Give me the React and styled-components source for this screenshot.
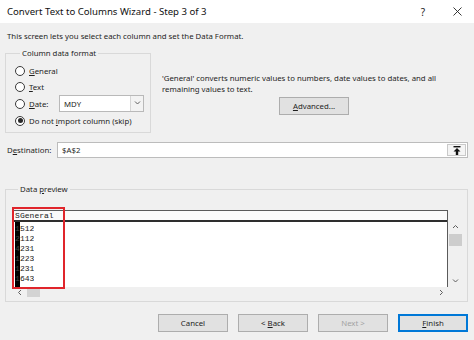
import React from "react";
import styled, { createGlobalStyle } from "styled-components";

const Global = createGlobalStyle`
  html, body { margin: 0; padding: 0; background: #f0f0f0; }
  body { font-family: "Noto Sans", "Open Sans", sans-serif; color: #1e1e1e; }
  u { text-decoration: underline; text-underline-offset: 1px; }
`;

const Window = styled.div`
  width: 474px;
  height: 340px;
  background: #f0f0f0;
  display: flex;
  flex-direction: column;
  overflow: hidden;
`;

const TitleBar = styled.div`
  height: 23px;
  flex: none;
  background: #fff;
  display: flex;
  align-items: center;
  justify-content: space-between;
  padding: 0 12px 0 7px;
  font-size: 9.6px;
  color: #111;
`;

const TitleControls = styled.div`
  display: flex;
  align-items: center;
  gap: 28px;
  font-size: 10px;
  color: #222;
`;

const Content = styled.div`
  padding: 0 6px 0 5px;
  display: flex;
  flex-direction: column;
  font-size: 7.8px;
  line-height: 10px;
`;

const Intro = styled.div`
  margin-top: 8px;
  padding-left: 2px;
`;

const TopRow = styled.div`
  display: flex;
  margin-top: 7px;
`;

const Group = styled.fieldset`
  margin: 0;
  min-width: 0;
  border: 1px solid #d9d9d9;
  padding: ${(p) => p.$pad};
  width: ${(p) => p.$w || "auto"};
  box-sizing: border-box;
`;

const Legend = styled.legend`
  margin-left: 5px;
  padding: 0 2px;
  font-size: 7.8px;
  line-height: 10px;
`;

const RadioRow = styled.label`
  display: flex;
  align-items: center;
  height: ${(p) => p.$h || 16}px;
  gap: 4px;
`;

const Radio = styled.span`
  width: 10px;
  height: 10px;
  box-sizing: border-box;
  border-radius: 50%;
  border: 1px solid #3a3a3a;
  background: #fff;
  display: flex;
  align-items: center;
  justify-content: center;
  flex: none;
  &::after {
    content: "";
    width: 5px;
    height: 5px;
    border-radius: 50%;
    background: ${(p) => (p.$checked ? "#2a2a2a" : "transparent")};
  }
`;

const DateLabel = styled.span`
  width: 26px;
`;

const Combo = styled.div`
  width: 85px;
  height: 17px;
  box-sizing: border-box;
  border: 1px solid #b9b9b9;
  background: #fff;
  display: flex;
  align-items: stretch;
`;

const ComboText = styled.span`
  flex: 1;
  padding-left: 4px;
  display: flex;
  align-items: center;
`;

const ComboButton = styled.span`
  width: 12px;
  border-left: 1px solid #d6d6d6;
  background: #f3f3f3;
  display: flex;
  align-items: center;
  justify-content: center;
`;

const InfoCol = styled.div`
  margin-left: 11px;
  padding-top: 25px;
  display: flex;
  flex-direction: column;
  line-height: 11px;
`;

const Button = styled.button`
  width: 70px;
  height: 18px;
  box-sizing: border-box;
  border: 1px solid ${(p) => (p.$default ? "#0078d7" : "#adadad")};
  box-shadow: ${(p) => (p.$default ? "inset 0 0 0 1px #0078d7" : "none")};
  background: #e1e1e1;
  color: ${(p) => (p.$disabled ? "#a3a3a3" : "#1e1e1e")};
  font-family: "Noto Sans", "Open Sans", sans-serif;
  font-size: 7.8px;
  padding: 0;
  margin: 0;
  display: flex;
  align-items: center;
  justify-content: center;
`;

const AdvancedWrap = styled.div`
  margin-top: 2px;
  margin-left: 117px;
`;

const DestRow = styled.div`
  display: flex;
  align-items: center;
  margin-top: 9px;
  padding-left: 2px;
`;

const DestLabel = styled.span`
  width: 50px;
`;

const DestInput = styled.div`
  flex: 1;
  height: 16px;
  box-sizing: border-box;
  border: 1px solid #bcbcbc;
  background: #fff;
  display: flex;
  align-items: stretch;
`;

const DestText = styled.span`
  flex: 1;
  padding-left: 4px;
  display: flex;
  align-items: center;
`;

const DestButton = styled.span`
  width: 17px;
  margin: 1px;
  border: 1px solid #c9c9c9;
  background: #f4f4f4;
  display: flex;
  align-items: center;
  justify-content: center;
`;

const PreviewBox = styled.div`
  position: relative;
  display: grid;
  grid-template-columns: 1fr 15px;
  grid-template-rows: 80px 11px;
`;

const GridArea = styled.div`
  padding-top: 3px;
  display: flex;
  flex-direction: column;
`;

const Table = styled.div`
  flex: 1;
  border: 1px solid #5a5a5a;
  border-bottom: none;
  background: #fff;
  display: flex;
  flex-direction: column;
  font-family: "Liberation Mono", "DejaVu Sans Mono", monospace;
  font-size: 8px;
  line-height: 10px;
  color: #222;
`;

const HeaderRow = styled.div`
  height: 9px;
  display: flex;
  padding-left: 1px;
  background: #fafafa;
  border-bottom: 2px solid #2e2e2e;
  line-height: 10px;
`;

const Body = styled.div`
  flex: 1;
  display: flex;
  padding-left: 1px;
`;

const Col = styled.div`
  width: ${(p) => (p.$w ? `${p.$w}px` : "auto")};
  background: ${(p) => (p.$selected ? "#000" : "transparent")};
  color: ${(p) => (p.$selected ? "#444" : "#222")};
  padding-top: 2px;
  overflow: hidden;
  white-space: pre;
`;

const HeadCell = styled.span`
  width: ${(p) => (p.$w ? `${p.$w}px` : "auto")};
  overflow: hidden;
  white-space: pre;
`;

const VScroll = styled.div`
  margin-top: 14px;
  display: flex;
  flex-direction: column;
  align-items: center;
`;

const ScrollArrow = styled.div`
  height: 12px;
  width: 100%;
  display: flex;
  align-items: center;
  justify-content: center;
`;

const VThumb = styled.div`
  width: 13px;
  height: 12px;
  margin-top: 1px;
  background: #cdcdcd;
`;

const Spacer = styled.div`
  flex: 1;
`;

const HScroll = styled.div`
  display: flex;
  align-items: center;
`;

const HArrow = styled.div`
  width: 14px;
  height: 11px;
  display: flex;
  align-items: center;
  justify-content: center;
`;

const HThumb = styled.div`
  width: 13px;
  height: 8px;
  background: #d3d3d3;
`;

const Highlight = styled.div`
  position: absolute;
  left: -1px;
  top: 0;
  width: 53px;
  height: 82px;
  box-sizing: border-box;
  border: 2px solid #e0252b;
  pointer-events: none;
`;

const ButtonRow = styled.div`
  display: flex;
  justify-content: flex-end;
  gap: 10px;
  margin-top: 12px;
`;

const Chevron = ({ dir }) => {
  const pts = {
    up: "1,4 3.5,1.5 6,4",
    down: "1,1.5 3.5,4 6,1.5",
    left: "4,1 1.5,3.5 4,6",
    right: "2,1 4.5,3.5 2,6",
  }[dir];
  return (
    <svg width="7" height="7" viewBox="0 0 7 7">
      <polyline points={pts} fill="none" stroke="#5f5f5f" strokeWidth="1" />
    </svg>
  );
};

const CloseIcon = () => (
  <svg width="9" height="9" viewBox="0 0 9 9">
    <path d="M0.5 0.5 L8.5 8.5 M8.5 0.5 L0.5 8.5" stroke="#222" strokeWidth="0.9" />
  </svg>
);

const UploadIcon = () => (
  <svg width="8" height="9" viewBox="0 0 8 9">
    <rect x="0.5" y="0" width="7" height="1.4" fill="#111" />
    <polygon points="4,2 7.5,5.5 5.2,5.5 5.2,9 2.8,9 2.8,5.5 0.5,5.5" fill="#111" />
  </svg>
);

const firstChars = ["1", "2", "4", "1", "1", "1"];
const values = ["512", "112", "231", "223", "231", "643"];

export default function App() {
  return (
    <Window>
      <Global />
      <TitleBar>
        <span>Convert Text to Columns Wizard - Step 3 of 3</span>
        <TitleControls>
          <span>?</span>
          <CloseIcon />
        </TitleControls>
      </TitleBar>
      <Content>
        <Intro>This screen lets you select each column and set the Data Format.</Intro>
        <TopRow>
          <Group $w="146px" $pad="5px 4px 3px 9px">
            <Legend>Column data format</Legend>
            <RadioRow>
              <Radio />
              <span>
                <u>G</u>eneral
              </span>
            </RadioRow>
            <RadioRow>
              <Radio />
              <span>
                <u>T</u>ext
              </span>
            </RadioRow>
            <RadioRow $h={17}>
              <Radio />
              <DateLabel>
                <u>D</u>ate:
              </DateLabel>
              <Combo>
                <ComboText>MDY</ComboText>
                <ComboButton>
                  <Chevron dir="down" />
                </ComboButton>
              </Combo>
            </RadioRow>
            <RadioRow $h={17}>
              <Radio $checked />
              <span>
                Do not <u>i</u>mport column (skip)
              </span>
            </RadioRow>
          </Group>
          <InfoCol>
            <span>'General' converts numeric values to numbers, date values to dates, and all</span>
            <span>remaining values to text.</span>
            <AdvancedWrap>
              <Button>
                <span>
                  <u>A</u>dvanced...
                </span>
              </Button>
            </AdvancedWrap>
          </InfoCol>
        </TopRow>
        <DestRow>
          <DestLabel>
            D<u>e</u>stination:
          </DestLabel>
          <DestInput>
            <DestText>$A$2</DestText>
            <DestButton>
              <UploadIcon />
            </DestButton>
          </DestInput>
        </DestRow>
        <Group style={{ marginTop: 26 }} $pad="13px 4px 3px 7px">
          <Legend>
            Data <u>p</u>review
          </Legend>
          <PreviewBox>
            <GridArea>
              <Table>
                <HeaderRow>
                  <HeadCell $w={5}>S</HeadCell>
                  <HeadCell>General</HeadCell>
                </HeaderRow>
                <Body>
                  <Col $w={5} $selected>
                    {firstChars.map((c, i) => (
                      <div key={i}>{c}</div>
                    ))}
                  </Col>
                  <Col>
                    {values.map((v, i) => (
                      <div key={i}>{v}</div>
                    ))}
                  </Col>
                </Body>
              </Table>
            </GridArea>
            <VScroll>
              <ScrollArrow>
                <Chevron dir="up" />
              </ScrollArrow>
              <VThumb />
              <Spacer />
              <ScrollArrow>
                <Chevron dir="down" />
              </ScrollArrow>
            </VScroll>
            <HScroll>
              <HArrow>
                <Chevron dir="left" />
              </HArrow>
              <HThumb />
              <Spacer />
              <HArrow>
                <Chevron dir="right" />
              </HArrow>
            </HScroll>
            <div />
            <Highlight />
          </PreviewBox>
        </Group>
        <ButtonRow>
          <Button>Cancel</Button>
          <Button>
            <span>
              &lt; <u>B</u>ack
            </span>
          </Button>
          <Button $disabled>Next &gt;</Button>
          <Button $default>
            <span>
              <u>F</u>inish
            </span>
          </Button>
        </ButtonRow>
      </Content>
    </Window>
  );
}
